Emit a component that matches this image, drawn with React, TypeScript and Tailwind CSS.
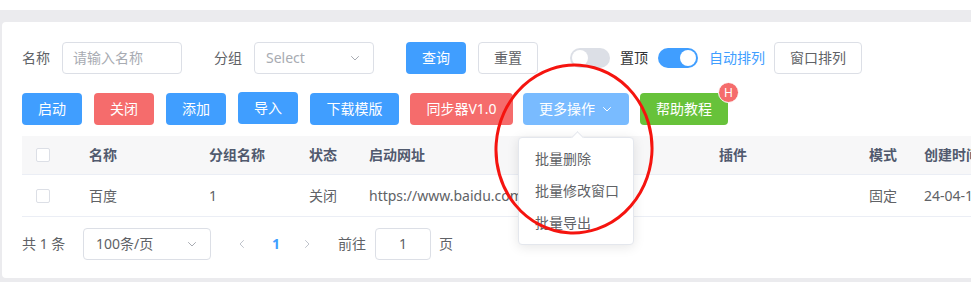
import React from "react";

const FONT = { fontFamily: '"Noto Sans", "Noto Sans CJK SC", sans-serif' };

function Chevron({ className = "" }: { className?: string }) {
  return (
    <svg width="12" height="12" viewBox="0 0 12 12" className={className} fill="none">
      <path d="M2.5 4.5 L6 8 L9.5 4.5" stroke="currentColor" strokeWidth="1" strokeLinecap="round" strokeLinejoin="round" />
    </svg>
  );
}

function Switch({ on }: { on: boolean }) {
  return (
    <div
      className={`flex h-[20px] w-[40px] items-center rounded-full px-[2px] ${on ? "justify-end bg-[#409eff]" : "justify-start bg-[#dcdfe6]"}`}
    >
      <div className="h-[16px] w-[16px] rounded-full bg-white" />
    </div>
  );
}

function Btn({ children, color, w, extra = "" }: { children: React.ReactNode; color: string; w: string; extra?: string }) {
  return (
    <div className={`flex h-[32px] ${w} shrink-0 items-center justify-center rounded-[4px] text-[14px] text-white ${color} ${extra}`}>
      {children}
    </div>
  );
}

function Checkbox() {
  return <div className="h-[14px] w-[14px] rounded-[2px] border border-[#dcdfe6] bg-white" />;
}

export default function App() {
  return (
    <div className="relative h-[282px] w-[971px] overflow-hidden bg-[#ebebee] leading-[20px]" style={FONT}>
      <div className="h-[10px] bg-white" />
      <div className="h-[12px]" />
      <div className="ml-[2px] flex h-[256px] w-[1010px] flex-col rounded-[4px] bg-white pl-[20px] pt-[20px] text-[14px] text-[#606266]">
        {/* row 1 */}
        <div className="flex h-[32px] items-center">
          <span className="w-[40px] shrink-0">名称</span>
          <div className="flex h-[32px] w-[120px] shrink-0 items-center rounded-[4px] border border-[#dcdfe6] px-[10px] text-[#a8abb2]">请输入名称</div>
          <span className="ml-[32px] w-[40px] shrink-0">分组</span>
          <div className="flex h-[32px] w-[120px] shrink-0 items-center justify-between rounded-[4px] border border-[#dcdfe6] pl-[11px] pr-[12px] text-[#a8abb2]">
            <span>Select</span>
            <Chevron className="text-[#a8abb2]" />
          </div>
          <Btn color="bg-[#409eff]" w="w-[60px]" extra="ml-[32px]">查询</Btn>
          <div className="ml-[12px] flex h-[32px] w-[60px] shrink-0 items-center justify-center rounded-[4px] border border-[#dcdfe6] text-[#606266]">重置</div>
          <div className="ml-[32px]"><Switch on={false} /></div>
          <span className="ml-[10px] w-[28px] shrink-0 text-[#303133]">置顶</span>
          <div className="ml-[10px]"><Switch on={true} /></div>
          <span className="ml-[11px] w-[56px] shrink-0 text-[#409eff]">自动排列</span>
          <div className="ml-[9px] flex h-[32px] w-[88px] shrink-0 items-center justify-center rounded-[4px] border border-[#dcdfe6] text-[#606266]">窗口排列</div>
        </div>
        {/* row 2 */}
        <div className="mt-[19px] flex h-[32px] items-center">
          <Btn color="bg-[#409eff]" w="w-[60px]">启动</Btn>
          <Btn color="bg-[#f56c6c]" w="w-[60px]" extra="ml-[12px]">关闭</Btn>
          <Btn color="bg-[#409eff]" w="w-[60px]" extra="ml-[12px]">添加</Btn>
          <Btn color="bg-[#409eff]" w="w-[60px]" extra="ml-[12px] -translate-y-[1px]">导入</Btn>
          <Btn color="bg-[#409eff]" w="w-[89px]" extra="ml-[12px]">下载模版</Btn>
          <Btn color="bg-[#f56c6c]" w="w-[103px]" extra="ml-[11px]">同步器V1.0</Btn>
          <div className="relative ml-[10px]">
            <Btn color="bg-[#79bbff]" w="w-[106px]">
              <span>更多操作</span>
              <Chevron className="ml-[6px] text-white" />
            </Btn>
          </div>
          <div className="relative ml-[11px]">
            <Btn color="bg-[#67c23a]" w="w-[88px]">帮助教程</Btn>
            <div className="absolute -right-[11px] -top-[11px] flex h-[21px] w-[21px] items-center justify-center rounded-full border border-white bg-[#f56c6c] text-[12px] text-white">H</div>
          </div>
        </div>
        {/* table */}
        <div className="mt-[11px] flex flex-col">
          <div className="flex h-[39px] items-center border-b border-[#ebeef5] bg-[#f7f7f8] font-semibold text-[#515a6e]">
            <div className="w-[55px] shrink-0 pl-[14px]"><Checkbox /></div>
            <div className="w-[120px] shrink-0 pl-[12px]">名称</div>
            <div className="w-[100px] shrink-0 pl-[12px]">分组名称</div>
            <div className="w-[60px] shrink-0 pl-[12px]">状态</div>
            <div className="w-[350px] shrink-0 pl-[12px]">启动网址</div>
            <div className="w-[150px] shrink-0 pl-[12px]">插件</div>
            <div className="w-[55px] shrink-0 pl-[12px]">模式</div>
            <div className="w-[100px] shrink-0 whitespace-nowrap pl-[12px]">创建时间</div>
          </div>
          <div className="flex h-[42px] items-center border-b border-[#ebeef5] text-[#606266]">
            <div className="w-[55px] shrink-0 pl-[14px]"><Checkbox /></div>
            <div className="w-[120px] shrink-0 pl-[12px]">百度</div>
            <div className="w-[100px] shrink-0 pl-[12px]">1</div>
            <div className="w-[60px] shrink-0 pl-[12px]">关闭</div>
            <div className="w-[350px] shrink-0 pl-[12px]">https://www.baidu.com</div>
            <div className="w-[150px] shrink-0 pl-[12px]"></div>
            <div className="w-[55px] shrink-0 pl-[12px]">固定</div>
            <div className="w-[100px] shrink-0 whitespace-nowrap pl-[12px]">24-04-16</div>
          </div>
        </div>
        {/* pagination */}
        <div className="mt-[11px] flex h-[32px] items-center text-[#606266]">
          <span className="w-[61px] shrink-0">共 1 条</span>
          <div className="flex h-[32px] w-[128px] shrink-0 items-center justify-between rounded-[4px] border border-[#dcdfe6] pl-[12px] pr-[12px]">
            <span>100条/页</span>
            <Chevron className="text-[#a8abb2]" />
          </div>
          <span className="ml-[26px] w-[35px] shrink-0 text-[#c0c4cc]">
            <svg width="10" height="12" viewBox="0 0 10 12" fill="none"><path d="M6.5 2.5 L3 6 L6.5 9.5" stroke="currentColor" strokeWidth="1" strokeLinecap="round" strokeLinejoin="round" /></svg>
          </span>
          <span className="w-[30px] shrink-0 font-bold text-[#409eff]">1</span>
          <span className="w-[36px] shrink-0 text-[#c0c4cc]">
            <svg width="10" height="12" viewBox="0 0 10 12" fill="none"><path d="M3.5 2.5 L7 6 L3.5 9.5" stroke="currentColor" strokeWidth="1" strokeLinecap="round" strokeLinejoin="round" /></svg>
          </span>
          <span className="w-[28px] shrink-0">前往</span>
          <div className="ml-[9px] flex h-[32px] w-[56px] shrink-0 items-center justify-center rounded-[4px] border border-[#dcdfe6]">1</div>
          <span className="ml-[8px]">页</span>
        </div>
      </div>

      {/* dropdown menu */}
      <div className="absolute left-[518px] top-[137px] w-[116px] rounded-[4px] border border-[#e4e7ed] bg-white py-[5px] text-[14px] text-[#606266] shadow-[0_2px_12px_rgba(0,0,0,0.1)]">
        <div className="absolute -top-[5px] left-[54px] h-[9px] w-[9px] rotate-45 border-l border-t border-[#e4e7ed] bg-white" />
        <div className="flex h-[32px] items-center pl-[16px]">批量删除</div>
        <div className="flex h-[32px] items-center pl-[16px]">批量修改窗口</div>
        <div className="flex h-[32px] items-center pl-[16px]">批量导出</div>
      </div>

      {/* red annotation ellipse */}
      <svg className="pointer-events-none absolute left-0 top-0" width="971" height="282">
        <ellipse cx="574" cy="149" rx="78" ry="84" fill="none" stroke="#f5140f" strokeWidth="3" transform="rotate(4 574 149)" />
      </svg>
    </div>
  );
}
